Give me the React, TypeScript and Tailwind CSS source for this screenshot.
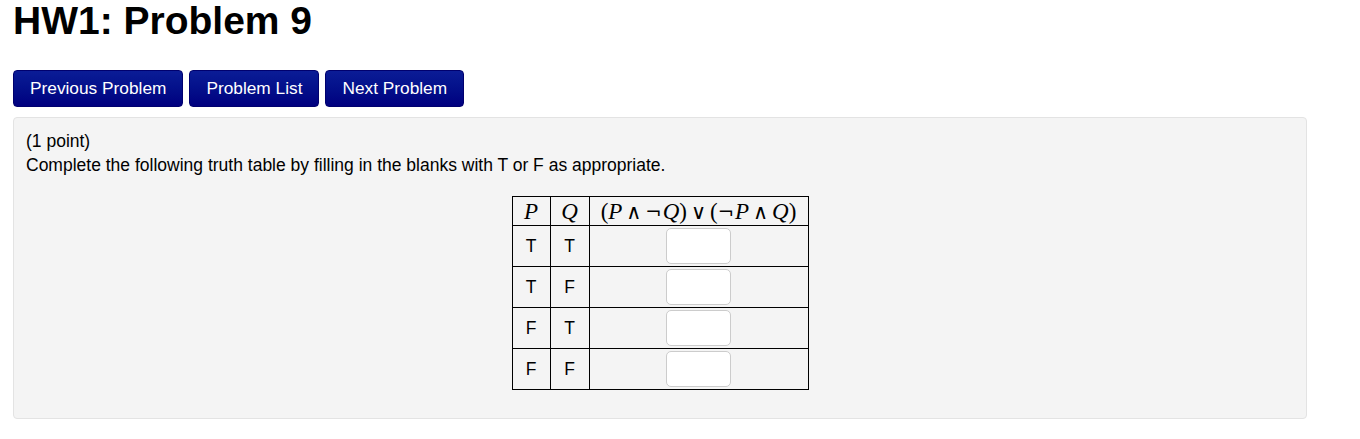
import React from 'react';

const rows: [string, string][] = [
  ['T', 'T'],
  ['T', 'F'],
  ['F', 'T'],
  ['F', 'F'],
];

const NavButton: React.FC<{ label: string }> = ({ label }) => (
  <button className="h-[37px] px-4 rounded-[4px] border border-[#00006e] bg-gradient-to-b from-[#0b1c96] to-[#00007f] text-white text-[17.3px] leading-none">
    {label}
  </button>
);

const mathFont = { fontFamily: '"Liberation Serif", "DejaVu Serif", "Times New Roman", serif' };
const symFont = { fontFamily: '"DejaVu Serif", serif' };

// variable in math italic
const V: React.FC<{ children: React.ReactNode }> = ({ children }) => <i>{children}</i>;
// binary operator with medium spacing
const Op: React.FC<{ children: React.ReactNode }> = ({ children }) => (
  <span className="mx-[0.19em] text-[0.9em]" style={symFont}>{children}</span>
);
const Not = () => (
  <span className="text-[0.85em] mr-[0.05em]" style={symFont}>¬</span>
);

export default function App() {
  return (
    <div className="min-h-screen bg-white text-black" style={{ fontFamily: '"Liberation Sans", Arial, sans-serif' }}>
      <div className="pl-[13px] w-[1307px]">
        <h1 className="m-0 text-[39px] leading-[42px] font-bold text-black">HW1: Problem 9</h1>

        <div className="mt-[28px] flex gap-[6px]">
          <NavButton label="Previous Problem" />
          <NavButton label="Problem List" />
          <NavButton label="Next Problem" />
        </div>

        {/* Problem body */}
        <div className="mt-[10px] h-[302px] bg-[#f4f4f4] border border-[#e3e3e3] rounded-[4px] px-3 pt-[11px] text-[17.5px] leading-[24px]">
          <div>(1 point)</div>
          <div>Complete the following truth table by filling in the blanks with T or F as appropriate.</div>

          <div className="mt-[19px] flex justify-center">
            <table className="border-collapse border border-black">
              <thead>
                <tr className="h-[29px]">
                  <th className="w-[38px] border border-black font-normal text-[23px] leading-none" style={mathFont}>
                    <V>P</V>
                  </th>
                  <th className="w-[39px] border border-black font-normal text-[23px] leading-none" style={mathFont}>
                    <V>Q</V>
                  </th>
                  <th className="w-[219px] border border-black font-normal text-[23px] leading-none whitespace-nowrap" style={mathFont}>
                    (<V>P</V><Op>∧</Op><Not /><V>Q</V>)<Op>∨</Op>(<Not /><V>P</V><Op>∧</Op><V>Q</V>)
                  </th>
                </tr>
              </thead>
              <tbody>
                {rows.map(([p, q], i) => (
                  <tr key={i} className="h-[41px]">
                    <td className="border border-black text-center">{p}</td>
                    <td className="border border-black text-center">{q}</td>
                    <td className="border border-black text-center">
                      <div className="flex justify-center">
                        <input
                          type="text"
                          className="w-[65px] h-[36px] bg-white border border-[#cccccc] rounded-[5px] outline-none"
                        />
                      </div>
                    </td>
                  </tr>
                ))}
              </tbody>
            </table>
          </div>
        </div>
      </div>
    </div>
  );
}
